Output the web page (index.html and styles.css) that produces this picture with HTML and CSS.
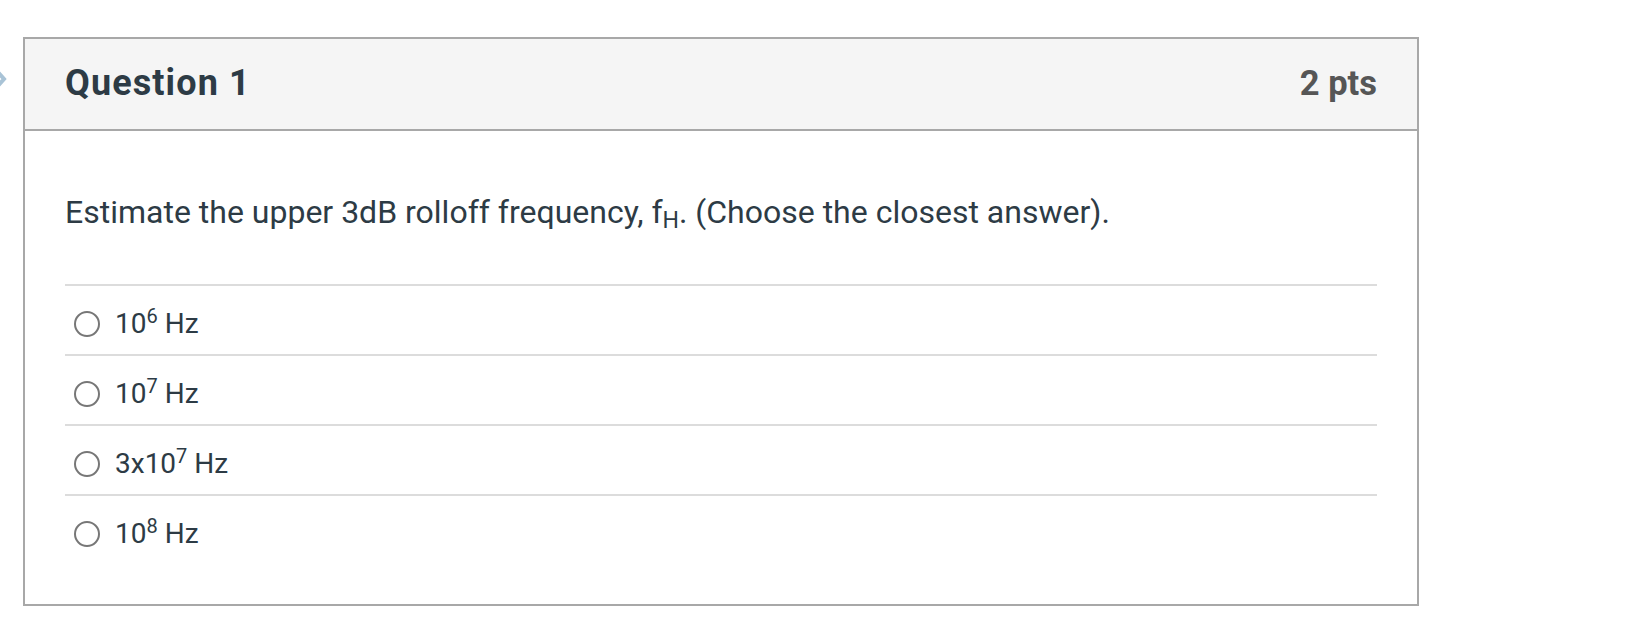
FILE: index.html
```html
<!DOCTYPE html>
<html>
<head>
<meta charset="utf-8">
<link rel="stylesheet" href="styles.css">
</head>
<body>
<div class="page">
  <svg class="nav-arrow" width="14" height="24" viewBox="0 0 14 24"><path d="M2 2 L11 12 L2 22" fill="none" stroke="#a9c3d6" stroke-width="4" stroke-linecap="round"/></svg>
  <div class="card">
    <div class="card-header">
      <div class="q-title">Question 1</div>
      <div class="q-pts">2 pts</div>
    </div>
    <div class="card-body">
      <p class="q-text">Estimate the upper 3dB rolloff frequency, f<sub class="sub">H</sub>. (Choose the closest answer).</p>
      <div class="answers">
        <label class="answer"><span class="radio"></span><span class="a-text">10<sup>6</sup> Hz</span></label>
        <label class="answer"><span class="radio"></span><span class="a-text">10<sup>7</sup> Hz</span></label>
        <label class="answer"><span class="radio"></span><span class="a-text">3x10<sup>7</sup> Hz</span></label>
        <label class="answer"><span class="radio"></span><span class="a-text">10<sup>8</sup> Hz</span></label>
      </div>
    </div>
  </div>
</div>
</body>
</html>
```
FILE: styles.css
```css
html, body {
  margin: 0;
  padding: 0;
  background: #ffffff;
}
body {
  font-family: Roboto, "Liberation Sans", sans-serif;
  color: #2d3b45;
}
.page {
  position: relative;
  padding: 37px 0 0 23px;
}
.nav-arrow {
  position: absolute;
  left: -7px;
  top: 67px;
}
.card {
  width: 1396px;
  box-sizing: border-box;
  border: 2px solid #a8a8a8;
}
.card-header {
  height: 88px;
  padding: 0 40px 2px;
  background: #f5f5f5;
  border-bottom: 2px solid #a8a8a8;
  display: flex;
  align-items: center;
  justify-content: space-between;
}
.q-title {
  font-size: 36px;
  letter-spacing: 1.1px;
  font-weight: 700;
  color: #2d3b45;
}
.q-pts {
  font-size: 34.5px;
  font-weight: 700;
  color: #565656;
}
.card-body {
  padding: 0 40px 40px;
}
.q-text {
  margin: 0;
  padding: 61px 0 52px;
  font-size: 32px;
  line-height: 40px;
}
.sub {
  font-size: 0.72em;
  vertical-align: -0.2em;
  line-height: 0;
}
.answer {
  display: flex;
  align-items: center;
  box-sizing: border-box;
  height: 70px;
  padding-top: 8px;
  border-top: 2px solid #dcdcdc;
}
.radio {
  width: 22px;
  height: 22px;
  border: 2px solid #777777;
  border-radius: 50%;
  margin-left: 9px;
  margin-right: 15px;
  flex: none;
}
.a-text {
  font-size: 28px;
  line-height: 36px;
}
.a-text sup {
  font-size: 20px;
  line-height: 0;
  vertical-align: 10px;
}
```
